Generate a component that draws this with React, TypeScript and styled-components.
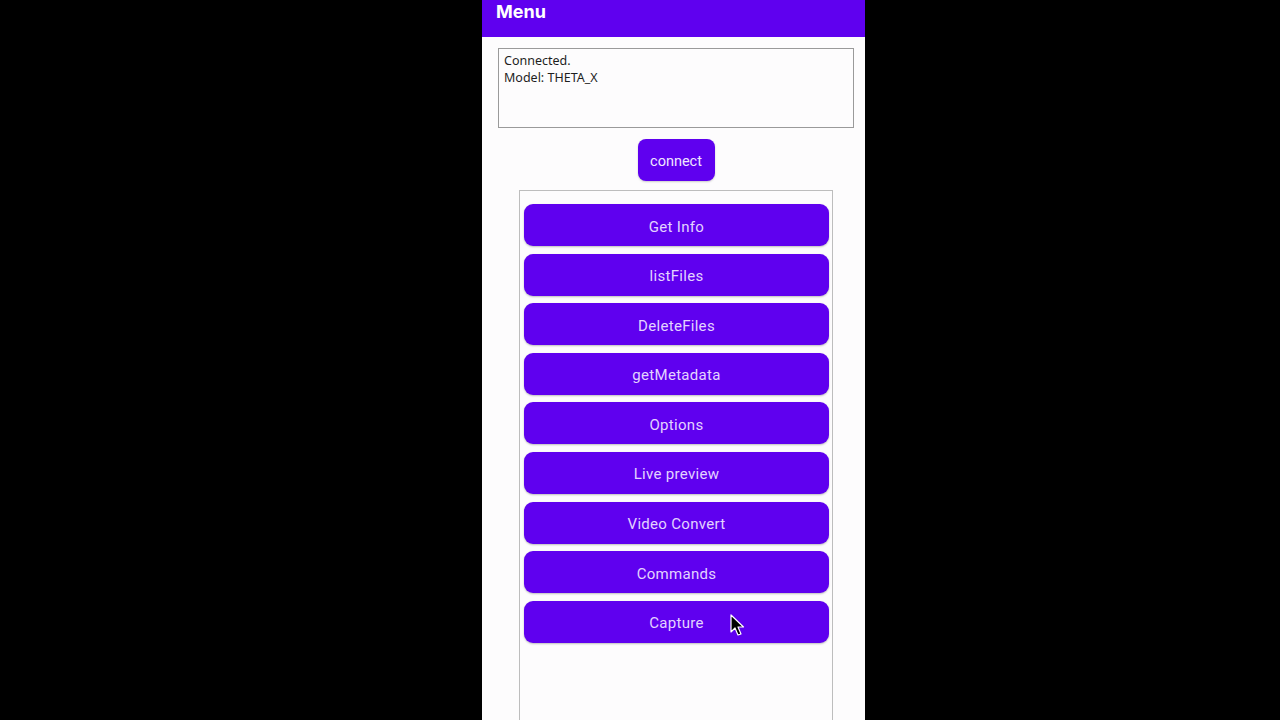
import React from "react";
import styled, { createGlobalStyle } from "styled-components";

const Global = createGlobalStyle`
  html, body { margin: 0; padding: 0; background: #000; }
  body { font-family: Roboto, "Noto Sans", sans-serif; }
`;

const Screen = styled.div`
  width: 1280px;
  height: 720px;
  overflow: hidden;
  background: #000;
  padding-left: 482px;
  box-sizing: border-box;
`;

const Phone = styled.div`
  position: relative;
  width: 383px;
  height: 720px;
  overflow: hidden;
  background: #fdfcfd;
  display: flex;
  flex-direction: column;
`;

const Header = styled.div`
  flex-shrink: 0;
  height: 37px;
  background: #5f00ef;
  color: #fff;
  font-family: Inter, Roboto, sans-serif;
  font-weight: 700;
  font-size: 18px;
  line-height: 24px;
  padding-left: 14px;
  box-sizing: border-box;
`;

const Body = styled.div`
  flex-shrink: 0;
  display: flex;
  flex-direction: column;
  align-items: center;
  padding: 11px 11px 0 16px;
  width: 356px;
`;

const Log = styled.div`
  width: 356px;
  height: 80px;
  box-sizing: border-box;
  border: 1px solid #9a9a9a;
  padding: 3px 5px;
  font-family: "Noto Sans", Roboto, sans-serif;
  font-size: 12.5px;
  line-height: 17px;
  color: #1e1e1e;
  white-space: pre-line;
`;

const Connect = styled.button`
  margin-top: 11px;
  width: 77px;
  height: 42px;
  border: none;
  border-radius: 8px;
  background: #5f00ef;
  color: #efe6ff;
  font-family: Roboto, sans-serif;
  font-size: 14.5px;
  padding: 2px 0 0;
  box-shadow: 0 1px 2px rgba(0, 0, 0, 0.2);
`;

const List = styled.div`
  margin-top: 9px;
  width: 314px;
  height: 600px;
  box-sizing: border-box;
  border: 1px solid #bdbdbd;
  padding: 13px 4px 0 4px;
  display: flex;
  flex-direction: column;
  gap: 7.6px;
`;

const ActionButton = styled.button`
  flex-shrink: 0;
  width: 305px;
  height: 42px;
  border: none;
  border-radius: 9px;
  background: #5f00ef;
  color: #e3d3ff;
  font-family: Roboto, sans-serif;
  font-size: 15px;
  letter-spacing: 0.3px;
  padding: 3px 0 0;
  box-shadow: 0 1px 2px rgba(0, 0, 0, 0.25);
`;

const Cursor = styled.svg`
  position: absolute;
  left: 248px;
  top: 614px;
`;

const items = [
  "Get Info",
  "listFiles",
  "DeleteFiles",
  "getMetadata",
  "Options",
  "Live preview",
  "Video Convert",
  "Commands",
  "Capture",
];

export default function App() {
  return (
    <>
      <Global />
      <Screen>
        <Phone>
          <Header>Menu</Header>
          <Body>
            <Log>{"Connected.\nModel: THETA_X"}</Log>
            <Connect>connect</Connect>
            <List>
              {items.map((t) => (
                <ActionButton key={t}>{t}</ActionButton>
              ))}
            </List>
          </Body>
          <Cursor width="16" height="24" viewBox="0 0 16 24">
            <path
              d="M1 1 L1 18 L5 14 L8 21 L11 20 L8 13 L13.5 13 Z"
              fill="#000"
              stroke="#fff"
              strokeWidth="1.2"
              strokeLinejoin="round"
            />
          </Cursor>
        </Phone>
      </Screen>
    </>
  );
}
